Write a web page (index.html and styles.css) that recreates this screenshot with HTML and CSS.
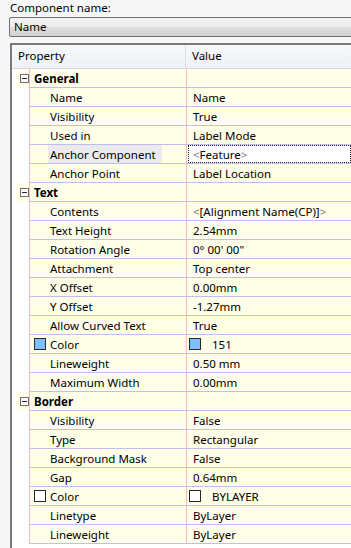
FILE: index.html
```html
<!DOCTYPE html>
<html lang="en">
  <head>
    <meta charset="UTF-8" />
    <meta name="viewport" content="width=device-width, initial-scale=1.0" />
    <title>Label Style Composer - Properties</title>
    <link rel="stylesheet" href="styles.css">
  </head>
  <body>
    <div class="label">Component name:</div>
    <div class="combo">Name</div>

    <div class="pgrid">
      <div class="pg-head">
        <div class="h-prop">Property</div>
        <div class="h-val">Value</div>
      </div>

      <div class="row cat"><span class="margin"><span class="toggle"></span></span><span class="name">General</span><span class="val"></span></div>
      <div class="row"><span class="margin"></span><span class="name">Name</span><span class="val">Name</span></div>
      <div class="row"><span class="margin"></span><span class="name">Visibility</span><span class="val">True</span></div>
      <div class="row"><span class="margin"></span><span class="name">Used in</span><span class="val">Label Mode</span></div>
      <div class="row"><span class="margin"></span><span class="name"><span class="selected">Anchor Component</span></span><span class="val focus"><span class="edit"><span class="br">&lt;</span>Feature<span class="br">&gt;</span></span></span></div>
      <div class="row"><span class="margin"></span><span class="name">Anchor Point</span><span class="val">Label Location</span></div>

      <div class="row cat"><span class="margin"><span class="toggle"></span></span><span class="name">Text</span><span class="val"></span></div>
      <div class="row"><span class="margin"></span><span class="name">Contents</span><span class="val"><span class="br">&lt;</span>[Alignment Name(CP)]<span class="br">&gt;</span></span></div>
      <div class="row"><span class="margin"></span><span class="name">Text Height</span><span class="val">2.54mm</span></div>
      <div class="row"><span class="margin"></span><span class="name">Rotation Angle</span><span class="val">0° 00' 00"</span></div>
      <div class="row"><span class="margin"></span><span class="name">Attachment</span><span class="val">Top center</span></div>
      <div class="row"><span class="margin"></span><span class="name">X Offset</span><span class="val">0.00mm</span></div>
      <div class="row"><span class="margin"></span><span class="name">Y Offset</span><span class="val">-1.27mm</span></div>
      <div class="row"><span class="margin"></span><span class="name">Allow Curved Text</span><span class="val">True</span></div>
      <div class="row"><span class="margin"></span><span class="name sw"><span class="swatch blue"></span>Color</span><span class="val sw"><span class="swatch blue"></span>151</span></div>
      <div class="row"><span class="margin"></span><span class="name">Lineweight</span><span class="val">0.50 mm</span></div>
      <div class="row"><span class="margin"></span><span class="name">Maximum Width</span><span class="val">0.00mm</span></div>

      <div class="row cat"><span class="margin"><span class="toggle"></span></span><span class="name">Border</span><span class="val"></span></div>
      <div class="row"><span class="margin"></span><span class="name">Visibility</span><span class="val">False</span></div>
      <div class="row"><span class="margin"></span><span class="name">Type</span><span class="val">Rectangular</span></div>
      <div class="row"><span class="margin"></span><span class="name">Background Mask</span><span class="val">False</span></div>
      <div class="row"><span class="margin"></span><span class="name">Gap</span><span class="val">0.64mm</span></div>
      <div class="row"><span class="margin"></span><span class="name sw"><span class="swatch"></span>Color</span><span class="val sw"><span class="swatch"></span>BYLAYER</span></div>
      <div class="row"><span class="margin"></span><span class="name">Linetype</span><span class="val">ByLayer</span></div>
      <div class="row"><span class="margin"></span><span class="name">Lineweight</span><span class="val">ByLayer</span></div>
    </div>
  </body>
</html>
```

FILE: styles.css
```css
html,
body {
  margin: 0;
  height: 100%;
  overflow: hidden;
}
body {
  background-color: #f7f7f7;
  font-family: "Noto Sans", "Open Sans", sans-serif;
  font-size: 11.5px;
  color: #000;
}
.label {
  height: 17px;
  line-height: 16px;
  padding-left: 10px;
}
.combo {
  height: 20px;
  box-sizing: border-box;
  margin: 0 -6px 6px 9px;
  padding-left: 4px;
  line-height: 18px;
  border: 1px solid #707070;
  border-radius: 2px;
  background: linear-gradient(#f3f3f3 0%, #ececec 50%, #dedede 50%, #d2d2d2 100%);
}
.pgrid {
  margin-left: 10px;
  padding-bottom: 4px;
  border-left: 2px solid #7a7a7a;
  border-top: 2px solid #7a7a7a;
  background-color: #fff;
}
.pg-head {
  display: flex;
  height: 23px;
  line-height: 22px;
  background: linear-gradient(#f8f9fb, #eff0f4);
  border-bottom: 1px solid #d3d4dc;
}
.h-prop {
  width: 174px;
  padding-left: 6px;
  box-sizing: border-box;
  border-right: 1px solid #dcdde3;
}
.h-val {
  padding-left: 6px;
}
.row {
  display: flex;
  height: 19px;
}
.margin {
  flex: none;
  width: 17px;
  box-sizing: border-box;
  display: flex;
  align-items: center;
}
.cat .margin {
  border-left: 4px solid #fff;
  background-color: #fefee9;
}
.toggle {
  position: relative;
  width: 9px;
  height: 9px;
  box-sizing: border-box;
  margin-left: 4px;
  border: 1px solid #6d6d6d;
  background-color: #fff;
}
.toggle::after {
  content: "";
  position: absolute;
  left: 1px;
  top: 3px;
  width: 5px;
  height: 1px;
  background-color: #222;
}
.name,
.val {
  box-sizing: border-box;
  height: 19px;
  line-height: 19px;
  white-space: nowrap;
  overflow: hidden;
  background-color: #fefee9;
  border-left: 1px solid #f3bcbc;
  border-bottom: 1px solid #bebef2;
}
.name {
  flex: none;
  width: 157px;
  padding-left: 20px;
}
.val {
  flex: 1;
  padding-left: 6px;
}
.cat .name {
  padding-left: 4px;
  font-weight: bold;
}
.selected {
  display: inline-block;
  height: 18px;
  line-height: 19px;
  margin-left: -2px;
  padding: 0 6px 0 2px;
  background-color: #ebebeb;
}
.val.focus {
  padding-left: 1px;
}
.edit {
  display: block;
  height: 18px;
  box-sizing: border-box;
  padding-left: 4px;
  line-height: 17px;
  border: 1px dotted #222;
  background-color: #fff;
}
.br {
  color: #7a7a7a;
}
.sw {
  display: flex;
  align-items: center;
}
.name.sw {
  padding-left: 4px;
  gap: 4px;
}
.val.sw {
  padding-left: 2px;
  gap: 11px;
}
.swatch {
  flex: none;
  width: 12px;
  height: 12px;
  box-sizing: border-box;
  border: 1px solid #2a2a2a;
  background-color: #fff;
}
.swatch.blue {
  background-color: #80bfff;
}
```
